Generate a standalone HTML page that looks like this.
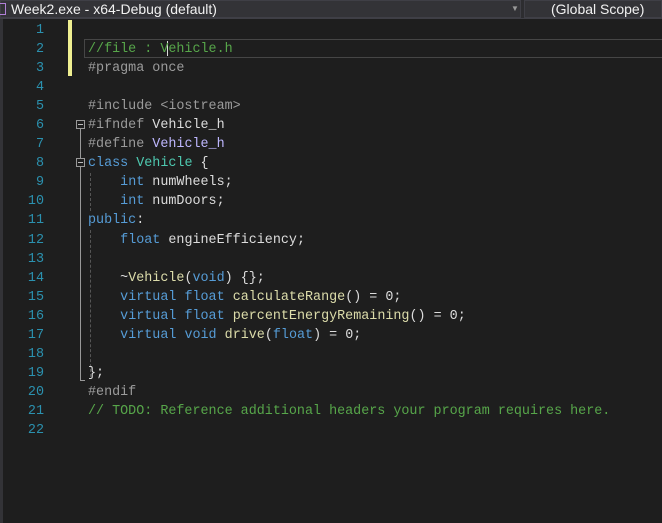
<!DOCTYPE html>
<html><head><style>
body{margin:0;width:662px;height:523px;background:#1e1e1e;overflow:hidden;position:relative;font-family:"Liberation Mono",monospace;}
#top{position:absolute;left:0;top:0;width:662px;height:18px;background:#2d2d30;border-bottom:1px solid #3f3f46;}
.dd{position:absolute;top:0;height:18px;background:#333337;border:1px solid #3f3f46;box-sizing:border-box;color:#f1f1f1;font:14px "Liberation Sans",sans-serif;line-height:16px;}
#strip{position:absolute;left:0;top:19px;width:3px;bottom:0;background:#333337;}
.c{color:#57a64a}.p{color:#9b9b9b}.k{color:#569cd6}.t{color:#4ec9b0}.m{color:#beb7ff}.f{color:#dcdcaa}
.box{position:absolute;left:76px;width:7px;height:7px;border:1px solid #999;}
.box:after{content:"";position:absolute;left:1px;top:3px;width:5px;height:1px;background:#bbb;}
</style></head><body>
<div id="top">
<div class="dd" style="left:0;width:521px;padding-left:10px">Week2.exe - x64-Debug (default)<span style="position:absolute;left:510px;top:0;color:#999;font-size:8px">▼</span></div>
<div class="dd" style="left:524px;width:138px;padding-left:26px">(Global Scope)</div>
<div style="position:absolute;left:0;top:3px;width:6px;height:12px;border:1px solid #b180d7;border-left:none;box-sizing:border-box"></div>
</div>
<div id="strip"></div>
<div style="position:absolute;left:68px;top:20px;width:4px;height:56px;background:#efef91"></div>
<div style="position:absolute;left:84px;top:39px;width:580px;height:19px;border:1px solid #464646;box-sizing:border-box"></div>
<div style="position:absolute;left:167px;top:41px;width:1px;height:15px;background:#dcdcdc"></div>
<div class="box" style="top:120px"></div>
<div class="box" style="top:158px"></div>
<div style="position:absolute;left:80px;top:129px;width:1px;height:29px;background:#999"></div>
<div style="position:absolute;left:80px;top:167px;width:1px;height:214px;background:#999"></div>
<div style="position:absolute;left:80px;top:380px;width:5px;height:1px;background:#999"></div>
<div style="position:absolute;left:90px;top:173px;width:0;height:38px;border-left:1px dashed #555"></div>
<div style="position:absolute;left:90px;top:230px;width:0;height:147px;border-left:1px dashed #555"></div>
<div style="position:absolute;left:0;top:20.5px;width:662px;line-height:19.1px">
<div style="position:absolute;left:0;width:44px;text-align:right;color:#2b91af;font-size:13.4px;white-space:pre">1
2
3
4
5
6
7
8
9
10
11
12
13
14
15
16
17
18
19
20
21
22</div>
<div style="position:absolute;left:88px;white-space:pre;color:#dcdcdc;font-size:13.4px">
<span class="c">//file : Vehicle.h</span>
<span class="p">#pragma once</span>

<span class="p">#include &lt;iostream&gt;</span>
<span class="p">#ifndef</span> Vehicle_h
<span class="p">#define</span> <span class="m">Vehicle_h</span>
<span class="k">class</span> <span class="t">Vehicle</span> {
    <span class="k">int</span> numWheels;
    <span class="k">int</span> numDoors;
<span class="k">public</span>:
    <span class="k">float</span> engineEfficiency;

    ~<span class="f">Vehicle</span>(<span class="k">void</span>) {};
    <span class="k">virtual</span> <span class="k">float</span> <span class="f">calculateRange</span>() = 0;
    <span class="k">virtual</span> <span class="k">float</span> <span class="f">percentEnergyRemaining</span>() = 0;
    <span class="k">virtual</span> <span class="k">void</span> <span class="f">drive</span>(<span class="k">float</span>) = 0;

};
<span class="p">#endif</span>
<span class="c">// TODO: Reference additional headers your program requires here.</span>
</div>
</div>
</body></html>
